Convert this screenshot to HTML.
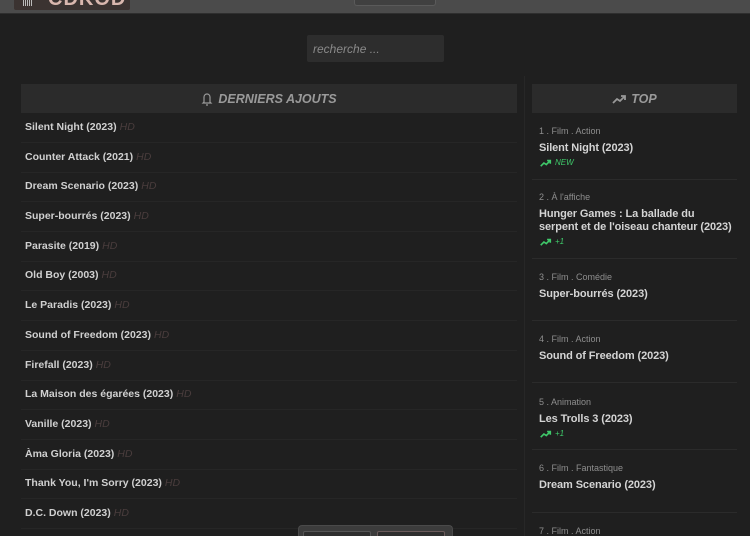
<!DOCTYPE html>
<html><head><meta charset="utf-8"><style>
*{margin:0;padding:0;box-sizing:border-box}
html,body{width:750px;height:536px;overflow:hidden}
body{background:#1f1f1f;font-family:"Liberation Sans",Arial,sans-serif;position:relative}
.hdr{position:absolute;left:0;top:0;width:750px;height:14px;background:#4b4b4b;border-bottom:1px solid #2e2e2e}
.logo{position:absolute;left:14px;top:0;width:116px;height:10px;background:#3b3331;border-radius:0 0 2px 2px;overflow:hidden}
.logo span{position:absolute;left:34px;top:-12px;font:bold 20px "Liberation Sans";color:#d9b7ae;letter-spacing:1px}
.logo i{position:absolute;left:9px;top:0;width:9px;height:6px;background:repeating-linear-gradient(90deg,#bbb 0 1px,transparent 1px 2px)}
.btn{position:absolute;left:354px;top:0;width:82px;height:6px;background:#404040;border:1px solid #5a5a5a;border-top:none;border-radius:0 0 3px 3px}
.search{position:absolute;left:307px;top:35px;width:137px;height:27px;background:#2d2d2d;border-radius:2px;color:#8a8a8a;font-style:italic;font-size:12px;padding:7px 6px}
.vd{position:absolute;left:524px;top:76px;width:1px;height:460px;background:#272727}
.ph{position:absolute;top:84px;height:29px;background:#2b2b2b;color:#9a9a9a;font-weight:bold;font-style:italic;font-size:12.5px;display:flex;align-items:center;justify-content:center;gap:5px}
.row{position:absolute;left:21px;width:496px;height:30px;border-bottom:1px solid #262626;font-size:10.5px;font-weight:bold;color:#d0d0d0;padding:8px 4px}
.row em{color:#4a3d3d;font-weight:normal;margin-left:3px}
.it{position:absolute;left:539px;width:200px}
.lb{font-size:9px;color:#8e8e8e}
.tt{font-size:11px;font-weight:bold;color:#d4d4d4;margin-top:6px;line-height:13px;letter-spacing:-0.1px}
.nw{font-size:8px;color:#3fc96a;font-style:italic;margin-top:3px;display:flex;align-items:center;gap:3px}
.sep{position:absolute;left:532px;width:205px;height:1px;background:#2b2b2b}
.fl{position:absolute;left:298px;top:525px;width:155px;height:11px;background:#3c3c3c;border-radius:4px 4px 0 0;border:1px solid #4a4a4a;border-bottom:none;overflow:hidden}
.fl b{position:absolute;top:5px;width:68px;height:14px;background:#2e2e2e;border:1px solid #555;border-radius:2px}
</style></head><body>
<div class="hdr"><div class="logo"><i></i><span>CDKOD</span></div><div class="btn"></div></div>
<div class="search">recherche ...</div>
<div class="vd"></div>
<div class="ph" style="left:21px;width:496px"><svg width="12" height="16" viewBox="0 0 12 16"><path d="M3 11V6a3 3 0 0 1 6 0v5l1 1H2z M5 14h2" fill="none" stroke="#999" stroke-width="1.2"/></svg>DERNIERS AJOUTS</div>
<div class="ph" style="left:532px;width:205px"><svg width="14" height="10" viewBox="0 0 14 10"><path d="M1 9l4-4 3 2 5-5M9 2h4v4" fill="none" stroke="#999" stroke-width="1.8"/></svg>TOP</div>
<div class="row" style="top:113px">Silent Night (2023)<em>HD</em></div>
<div class="row" style="top:143px">Counter Attack (2021)<em>HD</em></div>
<div class="row" style="top:172px">Dream Scenario (2023)<em>HD</em></div>
<div class="row" style="top:202px">Super-bourrés (2023)<em>HD</em></div>
<div class="row" style="top:232px">Parasite (2019)<em>HD</em></div>
<div class="row" style="top:261px">Old Boy (2003)<em>HD</em></div>
<div class="row" style="top:291px">Le Paradis (2023)<em>HD</em></div>
<div class="row" style="top:321px">Sound of Freedom (2023)<em>HD</em></div>
<div class="row" style="top:351px">Firefall (2023)<em>HD</em></div>
<div class="row" style="top:380px">La Maison des égarées (2023)<em>HD</em></div>
<div class="row" style="top:410px">Vanille (2023)<em>HD</em></div>
<div class="row" style="top:440px">Àma Gloria (2023)<em>HD</em></div>
<div class="row" style="top:469px">Thank You, I'm Sorry (2023)<em>HD</em></div>
<div class="row" style="top:499px">D.C. Down (2023)<em>HD</em></div>

<div class="it" style="top:126px"><div class="lb">1 . Film . Action</div><div class="tt">Silent Night (2023)</div><div class="nw"><svg width="13" height="8" viewBox="0 0 14 10"><path d="M1 9l4-4 3 2 5-5M9 2h4v4" fill="none" stroke="#3fc96a" stroke-width="2"/></svg>NEW</div></div>
<div class="sep" style="top:179px"></div>
<div class="it" style="top:192px"><div class="lb">2 . À l'affiche</div><div class="tt">Hunger Games : La ballade du<br>serpent et de l'oiseau chanteur (2023)</div><div class="nw"><svg width="13" height="8" viewBox="0 0 14 10"><path d="M1 9l4-4 3 2 5-5M9 2h4v4" fill="none" stroke="#3fc96a" stroke-width="2"/></svg>+1</div></div>
<div class="sep" style="top:258px"></div>
<div class="it" style="top:272px"><div class="lb">3 . Film . Comédie</div><div class="tt">Super-bourrés (2023)</div></div>
<div class="sep" style="top:320px"></div>
<div class="it" style="top:334px"><div class="lb">4 . Film . Action</div><div class="tt">Sound of Freedom (2023)</div></div>
<div class="sep" style="top:382px"></div>
<div class="it" style="top:397px"><div class="lb">5 . Animation</div><div class="tt">Les Trolls 3 (2023)</div><div class="nw"><svg width="13" height="8" viewBox="0 0 14 10"><path d="M1 9l4-4 3 2 5-5M9 2h4v4" fill="none" stroke="#3fc96a" stroke-width="2"/></svg>+1</div></div>
<div class="sep" style="top:449px"></div>
<div class="it" style="top:463px"><div class="lb">6 . Film . Fantastique</div><div class="tt">Dream Scenario (2023)</div></div>
<div class="sep" style="top:512px"></div>
<div class="it" style="top:526px"><div class="lb">7 . Film . Action</div></div>
<div class="fl"><b style="left:4px"></b><b style="left:78px;border-color:#6a5a5a"></b></div>
</body></html>
